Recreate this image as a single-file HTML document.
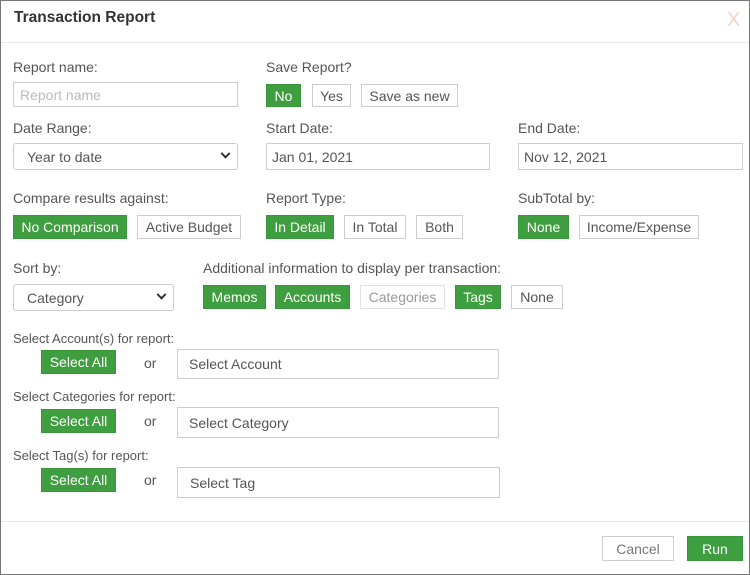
<!DOCTYPE html>
<html><head><meta charset="utf-8"><style>
*{box-sizing:border-box;margin:0;padding:0}
body{width:750px;height:575px;background:#fff;font-family:"Liberation Sans",Arial,sans-serif;font-size:14px;color:#555;position:relative;overflow:hidden}
.frame{position:absolute;left:0;top:0;width:750px;height:575px;border:1px solid #777}
.a{position:absolute;white-space:nowrap}
.l{position:absolute;line-height:16px;white-space:nowrap}
.b{position:absolute;border:1px solid #ccc;background:#fff;color:#555;display:flex;align-items:center;justify-content:center;white-space:nowrap}
.g{background:#3f9e3f;border-color:#3a963a;color:#fff}
.i{position:absolute;border:1px solid #ccc;background:#fff;padding-left:8px;display:flex;align-items:center;color:#555;white-space:nowrap}
.sel{border-radius:3px}
.chev{position:absolute;right:8px;top:50%;margin-top:-4px;width:7px;height:7px;border-right:2px solid #333;border-bottom:2px solid #333;transform:rotate(45deg) translate(-2px,-2px)}
</style></head><body>
<div class="frame"></div>
<div class="a" style="left:14px;top:9px;font-weight:bold;font-size:15.5px;color:#333">Transaction Report</div>
<div class="a" style="left:727px;top:9px;font-size:20px;color:#f6d3c3">X</div>
<div class="a" style="left:1px;top:42px;width:748px;height:1px;background:#e8e8e8"></div>

<div class="l" style="left:13px;top:59px">Report name:</div>
<div class="i" style="left:13px;top:82px;width:225px;height:25px;color:#bbb;padding-left:6px">Report name</div>
<div class="l" style="left:266px;top:59px">Save Report?</div>
<div class="b g" style="left:266px;top:84px;width:35px;height:23px">No</div>
<div class="b" style="left:312px;top:84px;width:39px;height:23px">Yes</div>
<div class="b" style="left:361px;top:84px;width:97px;height:23px">Save as new</div>

<div class="l" style="left:13px;top:120px">Date Range:</div>
<div class="i sel" style="left:13px;top:143px;width:225px;height:27px;padding-left:13px">Year to date<span class="chev"></span></div>
<div class="l" style="left:266px;top:120px">Start Date:</div>
<div class="i" style="left:266px;top:143px;width:224px;height:27px;padding-left:5px">Jan 01, 2021</div>
<div class="l" style="left:518px;top:120px">End Date:</div>
<div class="i" style="left:518px;top:143px;width:225px;height:27px;padding-left:5px">Nov 12, 2021</div>

<div class="l" style="left:13px;top:190px">Compare results against:</div>
<div class="b g" style="left:13px;top:215px;width:114px;height:24px">No Comparison</div>
<div class="b" style="left:137px;top:215px;width:104px;height:24px">Active Budget</div>
<div class="l" style="left:266px;top:190px">Report Type:</div>
<div class="b g" style="left:266px;top:215px;width:68px;height:24px">In Detail</div>
<div class="b" style="left:344px;top:215px;width:62px;height:24px">In Total</div>
<div class="b" style="left:416px;top:215px;width:47px;height:24px">Both</div>
<div class="l" style="left:518px;top:190px">SubTotal by:</div>
<div class="b g" style="left:518px;top:215px;width:51px;height:24px">None</div>
<div class="b" style="left:579px;top:215px;width:120px;height:24px">Income/Expense</div>

<div class="l" style="left:13px;top:260px">Sort by:</div>
<div class="i sel" style="left:13px;top:284px;width:161px;height:27px;padding-left:13px">Category<span class="chev"></span></div>
<div class="l" style="left:203px;top:260px">Additional information to display per transaction:</div>
<div class="b g" style="left:203px;top:285px;width:63px;height:24px">Memos</div>
<div class="b g" style="left:275px;top:285px;width:75px;height:24px">Accounts</div>
<div class="b" style="left:360px;top:285px;width:85px;height:24px;color:#999;border-color:#e2e2e2">Categories</div>
<div class="b g" style="left:455px;top:285px;width:46px;height:24px">Tags</div>
<div class="b" style="left:511px;top:285px;width:52px;height:24px">None</div>

<div class="l" style="left:13px;top:331px;font-size:13px">Select Account(s) for report:</div>
<div class="b g" style="left:41px;top:350px;width:75px;height:24px">Select All</div>
<div class="l" style="left:144px;top:355px">or</div>
<div class="i" style="left:177px;top:349px;width:322px;height:30px;padding-left:11px">Select Account</div>

<div class="l" style="left:13px;top:389px;font-size:13px">Select Categories for report:</div>
<div class="b g" style="left:41px;top:409px;width:75px;height:24px">Select All</div>
<div class="l" style="left:144px;top:413px">or</div>
<div class="i" style="left:177px;top:407px;width:322px;height:31px;padding-left:11px">Select Category</div>

<div class="l" style="left:13px;top:448px;font-size:13px">Select Tag(s) for report:</div>
<div class="b g" style="left:41px;top:468px;width:75px;height:24px">Select All</div>
<div class="l" style="left:144px;top:472px">or</div>
<div class="i" style="left:177px;top:467px;width:323px;height:31px;padding-left:12px">Select Tag</div>

<div class="a" style="left:1px;top:521px;width:748px;height:1px;background:#e8e8e8"></div>
<div class="b" style="left:602px;top:536px;width:72px;height:25px;color:#777">Cancel</div>
<div class="b g" style="left:687px;top:536px;width:56px;height:25px">Run</div>
</body></html>
